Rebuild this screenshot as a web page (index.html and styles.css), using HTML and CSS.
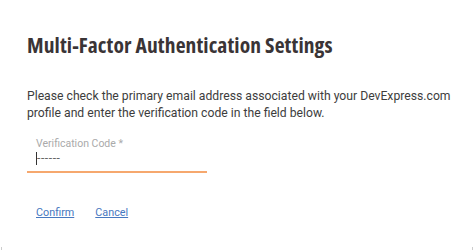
FILE: index.html
```html
<!DOCTYPE html>
<html>
<head>
<meta charset="utf-8" />
<title>Multi-Factor Authentication Settings</title>
<meta name="viewport" content="width=device-width, initial-scale=1">
<link rel="stylesheet" href="styles.css">
</head>

<body>
<div class="frame">
  <form name="mfa" class="form">
    <h1 class="title">Multi-Factor Authentication Settings</h1>

    <p class="intro">Please check the primary email address associated with your DevExpress.com profile and enter the verification code in the field below.</p>

    <div class="field">
      <label for="code" class="field-label">Verification Code *</label>
      <div class="field-input"><span class="caret"></span><input type="text" id="code" name="code" class="textbox" placeholder="------"></div>
    </div>

    <div class="actions">
      <a href="#" class="link">Confirm</a>
      <a href="#" class="link">Cancel</a>
    </div>
  </form>
</div>
</body>
</html>
```

FILE: styles.css
```css
body {
  margin: 0;
  font-family: Roboto, "Open Sans", sans-serif;
  color: #333;
  background: #fff;
}

.frame {
  height: 250px;
  box-sizing: border-box;
  padding: 30px 12px 0 27px;
  position: relative;
}

/* tiny edges of the next panel peeking in at the bottom */
.frame::before,
.frame::after {
  content: "";
  position: absolute;
  bottom: 0;
  width: 1px;
  height: 3px;
  background: #ccc;
}

.frame::before {
  left: 1px;
}

.frame::after {
  right: 1px;
}

.form {
  margin: 0;
}

.title {
  margin: 0;
  font-family: "Open Sans", sans-serif;
  font-size: 21.5px;
  font-weight: 700;
  font-stretch: 75%;
  line-height: 30px;
  color: #3a3436;
  letter-spacing: 0.1px;
}

.intro {
  margin: 28px 0 0;
  font-size: 12.2px;
  line-height: 16.5px;
  color: #3d3d3d;
}

.field {
  margin-top: 16px;
  width: 180px;
  border-bottom: 2px solid #f6a86e;
}

.field-label {
  display: block;
  padding-left: 9px;
  font-size: 10.5px;
  line-height: 13px;
  color: #aaa;
}

.field-input {
  display: flex;
  align-items: flex-start;
  padding: 2px 0 0 9px;
  height: 19px;
}

.caret {
  width: 1px;
  height: 13px;
  background: #333;
}

.textbox {
  border: none;
  outline: none;
  padding: 0;
  font-family: inherit;
  font-size: 12px;
  line-height: 13px;
  height: 13px;
  width: 150px;
  background: transparent;
}

.textbox::placeholder {
  color: #666;
  letter-spacing: 0.6px;
}

.actions {
  display: flex;
  gap: 21px;
  margin-top: 33px;
  padding-left: 9px;
}

.link {
  font-size: 10.8px;
  color: #4778c0;
  text-decoration: underline;
}
```
